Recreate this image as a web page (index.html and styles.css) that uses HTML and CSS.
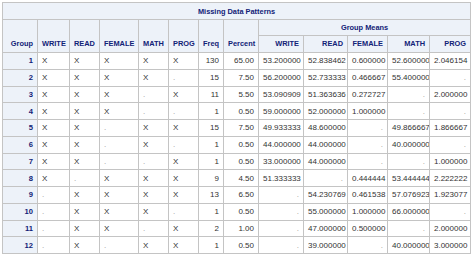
FILE: index.html
```html
<!DOCTYPE html>
<html>
<head>
<meta charset="utf-8">
<link rel="stylesheet" href="styles.css">
</head>
<body>
<table class="mdp">
  <colgroup>
    <col class="c-group"><col class="c-w"><col class="c-r"><col class="c-f"><col class="c-m"><col class="c-p">
    <col class="c-freq"><col class="c-pct">
    <col class="c-mw"><col class="c-mr"><col class="c-mf"><col class="c-mm"><col class="c-mp">
  </colgroup>
  <thead>
    <tr class="h1"><th colspan="13" class="title">Missing Data Patterns</th></tr>
    <tr class="h2">
      <th rowspan="2" class="num">Group</th>
      <th rowspan="2">WRITE</th>
      <th rowspan="2">READ</th>
      <th rowspan="2">FEMALE</th>
      <th rowspan="2">MATH</th>
      <th rowspan="2">PROG</th>
      <th rowspan="2" class="num">Freq</th>
      <th rowspan="2" class="num">Percent</th>
      <th colspan="5" class="title">Group Means</th>
    </tr>
    <tr class="h3">
      <th class="num">WRITE</th>
      <th class="num">READ</th>
      <th class="num">FEMALE</th>
      <th class="num">MATH</th>
      <th class="num">PROG</th>
    </tr>
  </thead>
  <tbody>
    <tr><th>1</th><td>X</td><td>X</td><td>X</td><td>X</td><td>X</td><td class="num">130</td><td class="num">65.00</td><td class="num">53.200000</td><td class="num">52.838462</td><td class="num">0.600000</td><td class="num">52.600000</td><td class="num">2.046154</td></tr>
    <tr><th>2</th><td>X</td><td>X</td><td>X</td><td>X</td><td class="miss">.</td><td class="num">15</td><td class="num">7.50</td><td class="num">56.200000</td><td class="num">52.733333</td><td class="num">0.466667</td><td class="num">55.400000</td><td class="num miss">.</td></tr>
    <tr><th>3</th><td>X</td><td>X</td><td>X</td><td class="miss">.</td><td>X</td><td class="num">11</td><td class="num">5.50</td><td class="num">53.090909</td><td class="num">51.363636</td><td class="num">0.272727</td><td class="num miss">.</td><td class="num">2.000000</td></tr>
    <tr><th>4</th><td>X</td><td>X</td><td>X</td><td class="miss">.</td><td class="miss">.</td><td class="num">1</td><td class="num">0.50</td><td class="num">59.000000</td><td class="num">52.000000</td><td class="num">1.000000</td><td class="num miss">.</td><td class="num miss">.</td></tr>
    <tr><th>5</th><td>X</td><td>X</td><td class="miss">.</td><td>X</td><td>X</td><td class="num">15</td><td class="num">7.50</td><td class="num">49.933333</td><td class="num">48.600000</td><td class="num miss">.</td><td class="num">49.866667</td><td class="num">1.866667</td></tr>
    <tr><th>6</th><td>X</td><td>X</td><td class="miss">.</td><td>X</td><td class="miss">.</td><td class="num">1</td><td class="num">0.50</td><td class="num">44.000000</td><td class="num">44.000000</td><td class="num miss">.</td><td class="num">40.000000</td><td class="num miss">.</td></tr>
    <tr><th>7</th><td>X</td><td>X</td><td class="miss">.</td><td class="miss">.</td><td>X</td><td class="num">1</td><td class="num">0.50</td><td class="num">33.000000</td><td class="num">44.000000</td><td class="num miss">.</td><td class="num miss">.</td><td class="num">1.000000</td></tr>
    <tr><th>8</th><td>X</td><td class="miss">.</td><td>X</td><td>X</td><td>X</td><td class="num">9</td><td class="num">4.50</td><td class="num">51.333333</td><td class="num miss">.</td><td class="num">0.444444</td><td class="num">53.444444</td><td class="num">2.222222</td></tr>
    <tr><th>9</th><td class="miss">.</td><td>X</td><td>X</td><td>X</td><td>X</td><td class="num">13</td><td class="num">6.50</td><td class="num miss">.</td><td class="num">54.230769</td><td class="num">0.461538</td><td class="num">57.076923</td><td class="num">1.923077</td></tr>
    <tr><th>10</th><td class="miss">.</td><td>X</td><td>X</td><td>X</td><td class="miss">.</td><td class="num">1</td><td class="num">0.50</td><td class="num miss">.</td><td class="num">55.000000</td><td class="num">1.000000</td><td class="num">66.000000</td><td class="num miss">.</td></tr>
    <tr><th>11</th><td class="miss">.</td><td>X</td><td>X</td><td class="miss">.</td><td>X</td><td class="num">2</td><td class="num">1.00</td><td class="num miss">.</td><td class="num">47.000000</td><td class="num">0.500000</td><td class="num miss">.</td><td class="num">2.000000</td></tr>
    <tr><th>12</th><td class="miss">.</td><td>X</td><td class="miss">.</td><td>X</td><td>X</td><td class="num">1</td><td class="num">0.50</td><td class="num miss">.</td><td class="num">39.000000</td><td class="num miss">.</td><td class="num">40.000000</td><td class="num">3.000000</td></tr>
  </tbody>
</table>
</body>
</html>
```

FILE: styles.css
```css
html, body {
  margin: 0;
  padding: 0;
  background: #ffffff;
}

.mdp {
  margin: 2px 0 0 2px;
  border-collapse: collapse;
  table-layout: fixed;
  width: 469px;
  font-family: "Liberation Sans", Arial, sans-serif;
  font-size: 8px;
  color: #333333;
}

.mdp th,
.mdp td {
  border: 1px solid #c4c4c4;
  padding: 0 4px;
  white-space: nowrap;
  overflow: hidden;
  line-height: 9px;
}

.mdp th {
  background: #edf2f9;
  color: #112277;
  font-weight: bold;
  font-size: 7.4px;
  text-align: left;
  vertical-align: bottom;
  padding-bottom: 4px;
}

.mdp th.title {
  text-align: center;
  vertical-align: middle;
  padding-bottom: 0;
}

.mdp th.num,
.mdp td.num {
  text-align: right;
}

.mdp tbody th {
  text-align: right;
  vertical-align: middle;
  padding-bottom: 0;
  font-size: 7.6px;
}

.mdp td {
  vertical-align: middle;
  text-align: left;
}

.mdp td.miss {
  color: #9a9a9a;
}

.h1 { height: 17px; }
.h2 { height: 16px; }
.h3 { height: 17px; }
.mdp tbody tr { height: 16.75px; }

.c-group { width: 35px; }
.c-w { width: 32px; }
.c-r { width: 30px; }
.c-f { width: 39px; }
.c-m { width: 30px; }
.c-p { width: 30px; }
.c-freq { width: 25px; }
.c-pct { width: 35px; }
.c-mw { width: 45px; }
.c-mr { width: 44px; }
.c-mf { width: 40px; }
.c-mm { width: 42px; }
.c-mp { width: 41px; }
```
